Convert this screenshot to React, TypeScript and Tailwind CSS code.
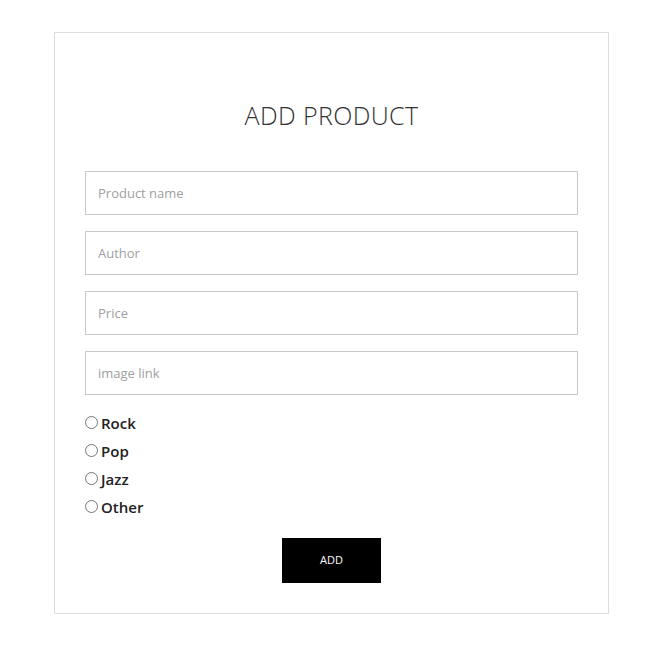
import React from "react";

const font = { fontFamily: '"Open Sans", "Noto Sans", sans-serif' };

export default function App() {
  const fields = ["Product name", "Author", "Price", "image link"];
  const genres = ["Rock", "Pop", "Jazz", "Other"];
  return (
    <div className="w-full min-h-[656px] bg-white pt-[32px]" style={font}>
      <div className="ml-[54px] w-[555px] border border-[#dddddd] px-[30px] pt-[64px] pb-[30px]">
        <h2 className="h-[36px] mb-[38px] text-center text-[25px] leading-[36px] font-light text-[#333333] tracking-[0.4px]">
          ADD PRODUCT
        </h2>
        <div className="flex flex-col gap-[16px]">
          {fields.map((f) => (
            <input
              key={f}
              type="text"
              placeholder={f}
              className="block h-[44px] w-full border border-[#c8c8c8] px-[12px] text-[13px] text-[#333] placeholder:text-[#a0a0a0] outline-none"
              style={font}
            />
          ))}
        </div>
        <div className="mt-[14px] flex flex-col">
          {genres.map((g) => (
            <label key={g} className="flex h-[28px] items-center">
              <input type="radio" name="genre" className="m-0 h-[13px] w-[13px] -translate-y-[1px]" />
              <span className="ml-[3px] text-[15px] font-semibold text-[#222]">{g}</span>
            </label>
          ))}
        </div>
        <div className="mt-[17px] flex justify-center">
          <button className="h-[45px] w-[99px] bg-black text-[11px] text-white" style={font}>
            ADD
          </button>
        </div>
      </div>
    </div>
  );
}
